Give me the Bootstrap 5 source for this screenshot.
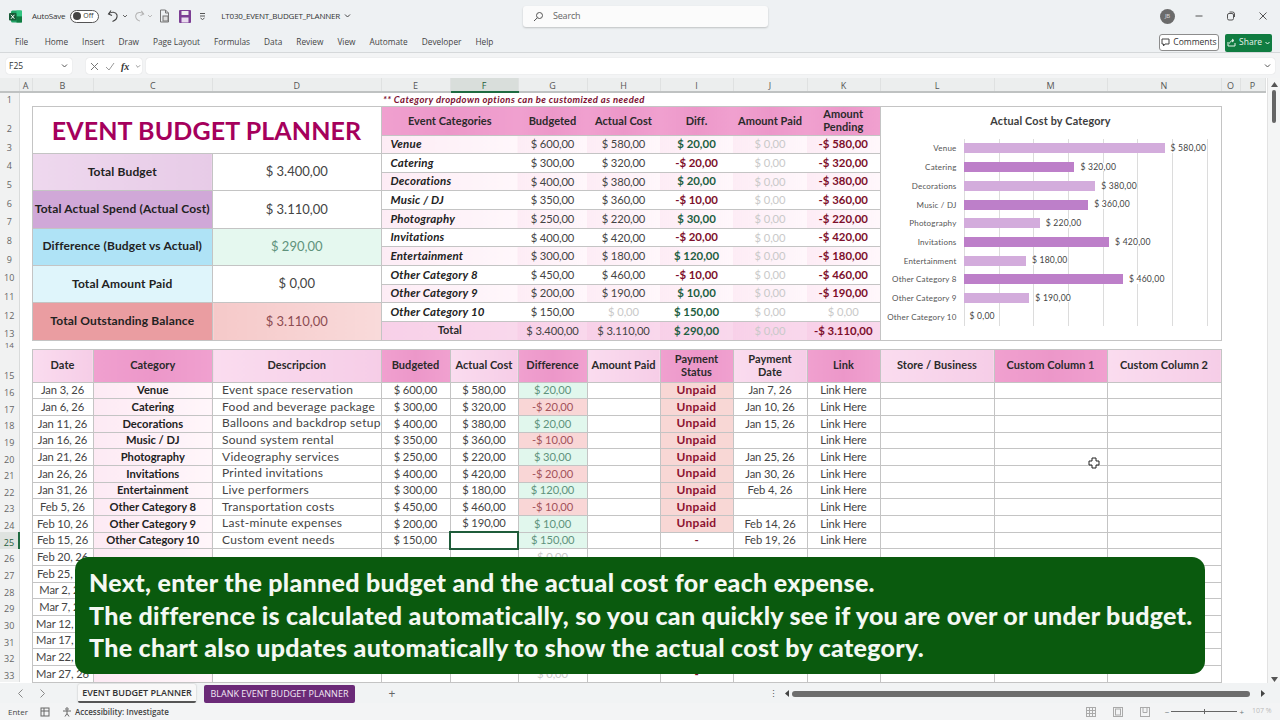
<!DOCTYPE html>
<html lang="en">
  <head>
    <meta charset="UTF-8" />
    <meta name="viewport" content="width=device-width, initial-scale=1.0" />
    <title>LT030_EVENT_BUDGET_PLANNER</title>
    <link href="https://cdn.jsdelivr.net/npm/bootstrap@5.3.3/dist/css/bootstrap.min.css" rel="stylesheet" />
    <style>
      body { background: #fff; overflow: hidden; }
      .xl-app { width: 1280px; height: 720px; overflow: hidden; font-family: "Open Sans", "Liberation Sans", sans-serif; color: #333; }

      /* window chrome */
      .xl-title { height: 30px; background: #eef1f3; font-size: 8px; letter-spacing: -.2px; padding: 2px 12px 0 9px; white-space: nowrap; }
      .xl-title svg { flex: none; }
      .xl-switch { width: 29px; height: 13px; border: 1px solid #555; border-radius: 7px; font-size: 7px; padding: 0 0 0 2px; margin: 0 7px 0 5px; background: #fff; letter-spacing: 0; }
      .xl-knob { width: 8px; height: 8px; border-radius: 50%; background: #444; margin-right: 2px; }
      .xl-search { width: 245px; height: 21px; margin-left: 172px; background: #fbfbfb; border-radius: 3px; box-shadow: 0 1px 2px rgba(0,0,0,.2); color: #666; padding-left: 10px; font-size: 9px; gap: 9px; }
      .xl-avatar { width: 15px; height: 15px; border-radius: 50%; background: #6b6b6b; color: #ddd; font-size: 6px; }
      .xl-ribbon { height: 23px; background: #eef1f3; font-size: 8.3px; padding: 3px 0 0 15px; border-bottom: 1px solid #d5d8da; white-space: nowrap; }
      .xl-ribbon-tab { margin-right: 14px; color: #444; }
      .xl-comments { width: 60px; height: 17px; border: 1px solid #8c8c8c; border-radius: 3px; background: #fff; font-size: 8.5px; gap: 3px; }
      .xl-share { width: 47px; height: 18px; margin: 0 8px 0 6px; border-radius: 2px; background: #107c41; color: #e8f3ec; font-size: 8.5px; gap: 3px; }
      .xl-formula { height: 25px; background: #f3f4f5; padding: 5px 5px 4px 6px; font-size: 8.5px; }
      .xl-box { background: #fff; border-radius: 3px; height: 16px; box-shadow: 0 0 1px rgba(0,0,0,.2); }
      .xl-namebox { width: 66px; padding: 0 4px 0 3px; }
      .xl-fnbox { width: 56px; gap: 6px; padding-left: 4px; margin: 0 4px 0 14px; }

      /* sheet */
      .xl-sheet { height: 605px; overflow: hidden; background: #fff; }
      .xl-grid-wrap { width: 1267px; overflow: hidden; }
      .xl-grid { table-layout: fixed; width: 1265px; font-family: Lato, "Liberation Sans", sans-serif; font-size: 12px; letter-spacing: .28px; color: #444; }
      .xl-grid td { padding: 0; overflow: hidden; white-space: nowrap; text-align: center; vertical-align: middle; line-height: 1; }
      .xl-h14 { height: 14px; }
      .xl-h29 { height: 29px; }
      .xl-h9 { height: 9px; }
      .xl-h33 { height: 33px; }
      .xl-top-row { height: 18.67px; }
      .xl-row { height: 16.67px; }
      .xl-grid .xl-top-row td, .xl-grid .xl-row td { padding-bottom: 1px; }
      .xl-grid td.xl-colhead { background: #eceeee; color: #555; font-family: "Open Sans", sans-serif; font-size: 9px; letter-spacing: 0; padding-top: 1px; border-bottom: 2px solid #bfc2c2; border-right: 1px solid #dfe1e1; }
      .xl-grid td.xl-colhead-on { background: #d9dedb; color: #1f5c3a; border-bottom: 2px solid #1f6b41; }
      .xl-grid td.xl-rowhead { background: #f1f2f2; color: #666; font-family: "Open Sans", sans-serif; font-size: 9px; letter-spacing: 0; vertical-align: bottom; padding-bottom: 2px; border-right: 1px solid #d9dbdb; }
      .xl-grid td.xl-rowhead-on { background: #dfe3e0; color: #1f5c3a; border-right: 2px solid #1f6b41; }
      .xl-grid td.xl-rowhead-tiny { font-size: 8px; line-height: 8px; padding-bottom: 0; }
      .xl-grid td.xl-bd { border: 1px solid #c4c4c4; }
      .xl-grid td.xl-hz { border-top: 1px solid #c4c4c4; border-bottom: 1px solid #c4c4c4; }
      .xl-grid td.xl-num { font-size: 11.2px; letter-spacing: -.1px; }
      .xl-grid td.xl-note { text-align: left; padding-left: 2px; font-size: 9.5px; font-weight: 700; font-style: italic; color: #7b1030; overflow: visible; letter-spacing: .42px; }
      .xl-grid td.xl-bigtitle { font-size: 25px; font-weight: 700; color: #a5005c; letter-spacing: .1px; background: #fff; padding-top: 1px; }
      .xl-grid td.xl-lbl { font-weight: 700; color: #222; font-size: 12px; letter-spacing: .15px; }
      .xl-grid td.xl-sum { font-size: 13px; letter-spacing: 0; color: #444; }
      .xl-grid td.xl-head { font-weight: 700; color: #2a2a2a; white-space: normal; line-height: 1.14; font-size: 11px; letter-spacing: .05px; }
      .xl-grid .xl-h29 td.xl-head { padding-top: 1px; }
      .xl-hd-dark { background: linear-gradient(90deg, #f0a0cf, #ec97c9 50%, #f0a0cf); }
      .xl-hd-light { background: linear-gradient(90deg, #fadcef, #f6cde7); }
      .xl-b-budget { background: linear-gradient(90deg, #eed8ee, #e7cbe7); }
      .xl-b-actual { background: #d0a8d8; }
      .xl-b-diff { background: #afe3f6; }
      .xl-b-paid { background: #dff5fb; }
      .xl-b-out { background: #ea9da1; }
      .xl-grid td.xl-v-diff { background: #e5f8ef; color: #5f937c; }
      .xl-grid td.xl-v-out { background: linear-gradient(90deg, #f5c9c9, #f9dada); color: #8d4c52; }
      .xl-grid td.xl-cat { text-align: left; padding-left: 9px; font-weight: 700; font-style: italic; color: #222; font-size: 11.5px; letter-spacing: .2px; }
      .xl-alt { background: linear-gradient(90deg, #fdecf5, #fff7fb); }
      .xl-total { background: linear-gradient(90deg, #f8d0e8, #f9d8ec); }
      .xl-grid td.xl-good { color: #1e5f42; font-weight: 700; font-size: 11.4px; letter-spacing: 0; }
      .xl-grid td.xl-bad { color: #7d0f2b; font-weight: 700; font-size: 11.4px; letter-spacing: 0; }
      .xl-grid td.xl-pale { color: #c9c9c9; }
      .xl-grid td.xl-desc { text-align: left; padding-left: 9px; }
      .xl-grid td.xl-catname { font-weight: 700; font-size: 11.2px; letter-spacing: 0; color: #222; background: linear-gradient(90deg, #fdeaf4, #fff6fa); }
      .xl-grid td.xl-d-good { background: #e1f7ed; color: #5f937c; }
      .xl-grid td.xl-d-bad { background: #f9d6d6; color: #a3525a; }
      .xl-grid td.xl-status { background: #f8d7d5; color: #8d1230; font-weight: 700; }
      .xl-grid td.xl-picked { border: 2px solid #1f5c3a; }

      /* chart */
      .xl-chart { height: 232px; font-size: 9px; letter-spacing: .2px; color: #555; padding-top: 7px; }
      .xl-chart-title { font-size: 10.8px; font-weight: 700; color: #3c3c3c; line-height: 14px; margin-bottom: 11px; }
      .xl-chart-row { height: 18.7px; }
      .xl-chart-lbl { width: 76px; text-align: right; flex: none; font-size: 8px; }
      .xl-plot { width: 245px; height: 100%; margin-left: 7px; background: repeating-linear-gradient(90deg, #dcdcdc 0 1px, transparent 1px 34.67px); }
      .xl-bar { height: 10px; }
      .xl-bar-a { background: #d3acdc; }
      .xl-bar-b { background: #bd7fc9; }
      .xl-bar-val { margin-left: 6px; font-size: 8.6px; color: #444; background: #fff; }

      .xl-vscroll { width: 13px; background: #f4f5f5; border-left: 1px solid #e2e2e2; }
      .xl-vthumb { width: 4px; height: 33px; border-radius: 2px; background: #666; margin-top: 3px; }

      /* caption over the sheet */
      .xl-caption { left: 75px; top: 479px; width: 1130px; height: 117px; padding: 9px 0 0 14px; background: #0a5a0e; border-radius: 13px; color: #f4f8f2; font-family: Lato, "Noto Sans", sans-serif; font-weight: 900; font-size: 25px; line-height: 32.5px; letter-spacing: .29px; white-space: nowrap; }
      .xl-cursor { left: 1088px; top: 379px; }

      /* bottom */
      .xl-tabs { height: 20px; padding-top: 1px; background: #f1f3f4; font-size: 9px; white-space: nowrap; }
      .xl-arrows { width: 78px; gap: 17px; padding-left: 18px; }
      .xl-tab-on { width: 118px; height: 19px; background: #f8f8f8; font-weight: 600; border-radius: 2px; border-bottom: 2px solid #555; box-shadow: 0 0 2px rgba(0,0,0,.25); color: #333; }
      .xl-tab-off { width: 151px; height: 18px; margin-left: 8px; background: #6b2a78; color: #f2e9f4; border-radius: 2px; }
      .xl-plus { margin-left: 32px; width: 10px; color: #666; font-size: 12px; }
      .xl-dots { margin-left: 372px; width: 8px; color: #555; }
      .xl-hscroll { width: 480px; margin-left: 8px; gap: 3px; }
      .xl-hthumb { width: 458px; height: 6px; border-radius: 3px; background: #6d6d6d; }
      .xl-status-bar { height: 17px; background: #f3f4f5; font-size: 8px; padding: 0 6px 0 8px; color: #444; white-space: nowrap; }
      .xl-enter { width: 32px; }
      .xl-zoom { width: 66px; height: 5px; margin: 0 2px; background: linear-gradient(#666, #666) center / 100% 1px no-repeat, linear-gradient(#666, #666) center / 1px 100% no-repeat; }
      .xl-pct { width: 22px; margin-left: 8px; color: #bbb; font-size: 7px; }
    </style>
  </head>

  <body>
    <div class="xl-app d-flex flex-column">
      <div class="xl-title d-flex align-items-center">
        <svg width="13" height="13" viewBox="0 0 13 13"><rect x="2" y="0.5" width="11" height="12" rx="1.5" fill="#21a366" /><rect x="7.5" y="0.5" width="5.5" height="6" fill="#33c481" /><rect x="7.5" y="6.5" width="5.5" height="6" fill="#107c41" /><rect x="0" y="3" width="7.5" height="7.5" rx="1" fill="#185c37" /><path d="M2 4.8l3.4 4M5.4 4.8L2 8.8" stroke="#fff" stroke-width="1" /></svg>
        <span style="margin-left:10px">AutoSave</span>
        <span class="xl-switch d-flex align-items-center"><span class="xl-knob"></span>Off</span>
        <svg width="14" height="14" viewBox="0 0 14 14" fill="none" stroke="#444" stroke-width="1.1"><path d="M5 1.5L2.5 5 6 6.5" /><path d="M2.8 4.8C5 2.6 10 2.6 11 6c.6 3-2 5.5-4.5 6.5" /></svg>
        <svg style="margin-left:2px" width="6" height="6" viewBox="0 0 6 6" fill="none" stroke="#666"><path d="M1 2l2 2 2-2" /></svg>
        <svg style="margin-left:5px" width="13" height="14" viewBox="0 0 14 14" fill="none" stroke="#b3b3b3" stroke-width="1.1"><path d="M9 1.5L11.5 5 8 6.5" /><path d="M11.2 4.8C9 2.6 4 2.6 3 6c-.6 3 2 5.5 4.5 6.5" /></svg>
        <svg style="margin-left:1px" width="6" height="6" viewBox="0 0 6 6" fill="none" stroke="#bbb"><path d="M1 2l2 2 2-2" /></svg>
        <svg style="margin-left:6px" width="11" height="14" viewBox="0 0 11 14" fill="none" stroke="#777"><path d="M1.5 1h5l3 3v9h-8z" /><path d="M6.5 1v3h3" /><rect x="4" y="7" width="5" height="5" fill="#ddd" /></svg>
        <svg style="margin-left:9px" width="12" height="13" viewBox="0 0 12 13"><rect width="12" height="13" rx="1" fill="#7c3e94" /><rect x="2.5" y="1" width="7" height="4" fill="#eee" /><rect x="2.5" y="7.5" width="7" height="5" fill="#e9dcef" /></svg>
        <svg style="margin-left:8px" width="7" height="8" viewBox="0 0 7 8" fill="none" stroke="#555"><path d="M1 1.5h5M1 4h5" /><path d="M1.5 6l2 1.5 2-1.5" /></svg>
        <span style="margin-left:15px">LT030_EVENT_BUDGET_PLANNER</span>
        <svg class="ms-1" width="7" height="6" viewBox="0 0 7 6" fill="none" stroke="#444"><path d="M1 1.5l2.5 2.5L6 1.5" /></svg>
        <div class="xl-search d-flex align-items-center">
          <svg width="11" height="11" viewBox="0 0 11 11" fill="none" stroke="#555"><circle cx="6.5" cy="4.5" r="3" /><path d="M4.3 6.8L1 10" /></svg>
          Search
        </div>
        <span class="xl-avatar d-flex align-items-center justify-content-center ms-auto">JB</span>
        <svg style="margin-left:19px" width="10" height="10" viewBox="0 0 10 10" stroke="#555"><path d="M1.5 5h7" /></svg>
        <svg style="margin-left:22px" width="10" height="10" viewBox="0 0 10 10" fill="none" stroke="#555"><rect x="1.5" y="2.5" width="6" height="6.5" rx="1.5" /><path d="M3.5 1h3a2 2 0 0 1 2 2v3" /></svg>
        <svg style="margin-left:22px" width="10" height="10" viewBox="0 0 10 10" stroke="#555"><path d="M1.5 1.5l7 7M8.5 1.5l-7 7" /></svg>
      </div>

      <div class="xl-ribbon d-flex align-items-center">
        <span class="xl-ribbon-tab" style="margin-right:16.5px">File</span>
        <span class="xl-ribbon-tab">Home</span>
        <span class="xl-ribbon-tab">Insert</span>
        <span class="xl-ribbon-tab">Draw</span>
        <span class="xl-ribbon-tab">Page Layout</span>
        <span class="xl-ribbon-tab">Formulas</span>
        <span class="xl-ribbon-tab">Data</span>
        <span class="xl-ribbon-tab">Review</span>
        <span class="xl-ribbon-tab">View</span>
        <span class="xl-ribbon-tab">Automate</span>
        <span class="xl-ribbon-tab">Developer</span>
        <span class="xl-ribbon-tab">Help</span>
        <div class="xl-comments d-flex align-items-center justify-content-center ms-auto">
          <svg width="9" height="9" viewBox="0 0 9 9" fill="none" stroke="#444"><path d="M1 1h7v5H4L2.5 8V6H1z" /></svg>
          Comments
        </div>
        <div class="xl-share d-flex align-items-center justify-content-center">
          <svg width="9" height="9" viewBox="0 0 9 9" fill="none" stroke="#e8f3ec"><path d="M1 4v4h7V5" /><path d="M2.5 5.5C3 3.5 4.5 2.5 6 2.5M5 1l2 1.5L5 4" /></svg>
          Share
          <svg width="5" height="4" viewBox="0 0 5 4" fill="none" stroke="#e8f3ec"><path d="M.5 1l2 2 2-2" /></svg>
        </div>
      </div>

      <div class="xl-formula d-flex align-items-center">
        <div class="xl-box xl-namebox d-flex align-items-center justify-content-between">
          F25
          <svg width="7" height="6" viewBox="0 0 7 6" fill="none" stroke="#555"><path d="M1 1.5l2.5 2.5L6 1.5" /></svg>
        </div>
        <div class="xl-box xl-fnbox d-flex align-items-center">
          <svg width="9" height="9" viewBox="0 0 9 9" stroke="#777"><path d="M1 1l7 7M8 1L1 8" /></svg>
          <svg width="10" height="9" viewBox="0 0 10 9" fill="none" stroke="#999"><path d="M1 5l3 3 5-7" /></svg>
          <i style="font-family:'Liberation Serif',serif;font-weight:700;font-size:10px">fx</i>
          <svg width="6" height="5" viewBox="0 0 7 6" fill="none" stroke="#888"><path d="M1 1.5l2.5 2.5L6 1.5" /></svg>
        </div>
        <div class="xl-box flex-grow-1 d-flex align-items-center justify-content-end pe-1">
          <svg width="7" height="6" viewBox="0 0 7 6" fill="none" stroke="#555"><path d="M1 1.5l2.5 2.5L6 1.5" /></svg>
        </div>
      </div>

      <div class="xl-sheet d-flex position-relative">
        <div class="xl-grid-wrap">
          <table class="xl-grid"><colgroup id="cols"></colgroup><tbody id="grid"></tbody></table>
        </div>
        <div class="xl-vscroll d-flex flex-column align-items-center">
          <svg class="mt-1" width="7" height="5" viewBox="0 0 7 5" fill="#555"><path d="M3.5 0L7 5H0z" /></svg>
          <div class="xl-vthumb"></div>
          <svg style="margin-top:auto;margin-bottom:1px" width="7" height="5" viewBox="0 0 7 5" fill="#555"><path d="M3.5 5L7 0H0z" /></svg>
        </div>
        <svg class="xl-cursor position-absolute" width="12" height="12" viewBox="0 0 12 12"><path d="M4 1h4v3h3v4H8v3H4V8H1V4h3z" fill="#fff" stroke="#222" /></svg>
        <div class="xl-caption position-absolute">
          Next, enter the planned budget and the actual cost for each expense.<br />
          The difference is calculated automatically, so you can quickly see if you are over or under budget.<br />
          The chart also updates automatically to show the actual cost by category.
        </div>
      </div>

      <div class="xl-tabs d-flex align-items-center">
        <div class="xl-arrows d-flex">
          <svg width="5" height="9" viewBox="0 0 5 9" fill="none" stroke="#888"><path d="M4.5 .5l-4 4 4 4" /></svg>
          <svg width="5" height="9" viewBox="0 0 5 9" fill="none" stroke="#888"><path d="M.5 .5l4 4-4 4" /></svg>
        </div>
        <div class="xl-tab-on d-flex align-items-center justify-content-center">EVENT BUDGET PLANNER</div>
        <div class="xl-tab-off d-flex align-items-center justify-content-center">BLANK EVENT BUDGET PLANNER</div>
        <span class="xl-plus text-center">+</span>
        <span class="xl-dots">&#8942;</span>
        <div class="xl-hscroll d-flex align-items-center">
          <svg width="4" height="7" viewBox="0 0 4 7" fill="#444"><path d="M4 0L0 3.5 4 7z" /></svg>
          <div class="xl-hthumb"></div>
          <svg class="ms-2" width="4" height="7" viewBox="0 0 4 7" fill="#444"><path d="M0 0l4 3.5L0 7z" /></svg>
        </div>
      </div>
      <div class="xl-status-bar d-flex align-items-center">
        <span class="xl-enter">Enter</span>
        <svg width="10" height="10" viewBox="0 0 10 10" fill="none" stroke="#666"><rect x="1" y="1" width="8" height="8" /><path d="M1 4h8M4 1v8" /></svg>
        <svg style="margin-left:12px" width="10" height="10" viewBox="0 0 10 10" fill="none" stroke="#666"><circle cx="5" cy="2" r="1.2" /><path d="M1 4h8M5 4v2.5M3 9.5L5 6.5 7 9.5" /></svg>
        <span class="fw-semibold" style="margin-left:3px">Accessibility: Investigate</span>
        <svg class="ms-auto" width="10" height="10" viewBox="0 0 10 10" fill="none" stroke="#aaa"><rect x=".5" y=".5" width="9" height="9" /><path d="M.5 3.5h9M.5 6.5h9M3.5 .5v9M6.5 .5v9" /></svg>
        <svg style="margin-left:17px" width="10" height="10" viewBox="0 0 10 10" fill="none" stroke="#aaa"><rect x=".5" y=".5" width="9" height="9" /><rect x="2.5" y="2" width="5" height="6" /></svg>
        <svg style="margin-left:17px" width="10" height="10" viewBox="0 0 10 10" fill="none" stroke="#aaa"><rect x=".5" y=".5" width="9" height="9" /><path d="M3 .5v5h4v-5" /></svg>
        <span class="text-secondary" style="margin-left:15px">&minus;</span>
        <span class="xl-zoom"></span>
        <span class="text-secondary">+</span>
        <span class="xl-pct">107 %</span>
      </div>
    </div>

    <script src="https://cdn.jsdelivr.net/npm/bootstrap@5.3.3/dist/js/bootstrap.bundle.min.js"></script>
    <script>
      const colWidths = [19, 13, 61, 119.5, 168.5, 69, 68, 69, 73, 73, 74, 73, 114, 113, 114, 19, 25];
      const colNames = ["", "A", "B", "C", "D", "E", "F", "G", "H", "I", "J", "K", "L", "M", "N", "O", "P"];

      function money(v) {
        const s = Math.abs(v).toLocaleString("de-DE", { minimumFractionDigits: 2 });
        return (v < 0 ? "-$ " : "$ ") + s;
      }

      const cats = [
        ["Venue", 600, 580], ["Catering", 300, 320], ["Decorations", 400, 380],
        ["Music / DJ", 350, 360], ["Photography", 250, 220], ["Invitations", 400, 420],
        ["Entertainment", 300, 180], ["Other Category 8", 450, 460],
        ["Other Category 9", 200, 190], ["Other Category 10", 150, 0],
      ];
      const summary = {
        4: ["Total Budget", "xl-b-budget", "$ 3.400,00", ""],
        6: ["Total Actual Spend (Actual Cost)", "xl-b-actual", "$ 3.110,00", ""],
        8: ["Difference (Budget vs Actual)", "xl-b-diff", "$ 290,00", "xl-v-diff"],
        10: ["Total Amount Paid", "xl-b-paid", "$ 0,00", ""],
        12: ["Total Outstanding Balance", "xl-b-out", "$ 3.110,00", "xl-v-out"],
      };
      const expenses = [
        ["Jan 3, 26", "Venue", "Event space reservation", 600, 580, "Jan 7, 26"],
        ["Jan 6, 26", "Catering", "Food and beverage package", 300, 320, "Jan 10, 26"],
        ["Jan 11, 26", "Decorations", "Balloons and backdrop setup", 400, 380, "Jan 15, 26"],
        ["Jan 16, 26", "Music / DJ", "Sound system rental", 350, 360, ""],
        ["Jan 21, 26", "Photography", "Videography services", 250, 220, "Jan 25, 26"],
        ["Jan 26, 26", "Invitations", "Printed invitations", 400, 420, "Jan 30, 26"],
        ["Jan 31, 26", "Entertainment", "Live performers", 300, 180, "Feb 4, 26"],
        ["Feb 5, 26", "Other Category 8", "Transportation costs", 450, 460, ""],
        ["Feb 10, 26", "Other Category 9", "Last-minute expenses", 200, 190, "Feb 14, 26"],
        ["Feb 15, 26", "Other Category 10", "Custom event needs", 150, 0, "Feb 19, 26"],
      ];
      const laterDates = ["Feb 20, 26", "Feb 25, 26", "Mar 2, 26", "Mar 7, 26", "Mar 12, 26", "Mar 17, 26", "Mar 22, 26", "Mar 27, 26"];

      function chartHtml() {
        const rows = cats.map((c, i) => `
          <div class="xl-chart-row d-flex align-items-center">
            <div class="xl-chart-lbl">${c[0]}</div>
            <div class="xl-plot d-flex align-items-center">
              <div class="xl-bar ${i % 2 ? "xl-bar-b" : "xl-bar-a"}" style="width:${c[2] * 0.3466}px"></div>
              <span class="xl-bar-val">${money(c[2])}</span>
            </div>
          </div>`).join("");
        return `<div class="xl-chart"><div class="xl-chart-title text-center">Actual Cost by Category</div>${rows}</div>`;
      }

      function head(r, cls) {
        return `<td class="xl-rowhead ${cls || ""}">${r}</td><td></td>`;
      }

      function topRow(r) {
        const c = cats[r - 3];
        let sum = "";
        if (summary[r]) {
          const s = summary[r];
          sum = `<td class="xl-bd xl-lbl ${s[1]}" colspan="2" rowspan="2">${s[0]}</td><td class="xl-bd xl-sum ${s[3]}" rowspan="2">${s[2]}</td>`;
        }
        if (!c) {
          return `<tr class="xl-top-row">${head(r)}${sum}
            <td class="xl-hz xl-head xl-total" colspan="2">Total</td>
            <td class="xl-hz xl-num xl-total">$ 3.400,00</td><td class="xl-hz xl-num xl-total">$ 3.110,00</td>
            <td class="xl-hz xl-total xl-good">$ 290,00</td><td class="xl-hz xl-num xl-total xl-pale">$ 0,00</td>
            <td class="xl-hz xl-total xl-bad">-$ 3.110,00</td><td></td><td></td></tr>`;
        }
        const diff = c[1] - c[2];
        const alt = r % 2 ? "xl-alt" : "";
        return `<tr class="xl-top-row">${head(r)}${sum}
          <td class="xl-hz xl-cat ${alt}" colspan="2">${c[0]}</td>
          <td class="xl-hz xl-num ${alt}">${money(c[1])}</td>
          <td class="xl-hz xl-num ${alt} ${c[2] ? "" : "xl-pale"}">${money(c[2])}</td>
          <td class="xl-hz ${alt} ${diff < 0 ? "xl-bad" : "xl-good"}">${money(diff)}</td>
          <td class="xl-hz xl-num ${alt} xl-pale">$ 0,00</td>
          <td class="xl-hz ${alt} ${c[2] ? "xl-bad" : "xl-num xl-pale"}">${money(-c[2])}</td>
          <td></td><td></td></tr>`;
      }

      function detailRow(r, e) {
        const diff = e[3] - e[4];
        const picked = r === 25;
        return `<tr class="xl-row">${head(r, picked ? "xl-rowhead-on" : "")}
          <td class="xl-bd xl-num">${e[0]}</td><td class="xl-bd xl-catname">${e[1]}</td><td class="xl-bd xl-desc">${e[2]}</td>
          <td class="xl-bd xl-num">${money(e[3])}</td>
          <td class="xl-bd xl-num ${picked ? "xl-picked" : ""}">${e[4] ? money(e[4]) : ""}</td>
          <td class="xl-bd xl-num ${diff < 0 ? "xl-d-bad" : "xl-d-good"}">${money(diff)}</td>
          <td class="xl-bd"></td>
          <td class="xl-bd ${picked ? "xl-bad" : "xl-status"}">${picked ? "-" : "Unpaid"}</td>
          <td class="xl-bd xl-num">${e[5]}</td><td class="xl-bd xl-num">Link Here</td>
          <td class="xl-bd"></td><td class="xl-bd"></td><td class="xl-bd"></td><td></td><td></td></tr>`;
      }

      function emptyRow(r, date) {
        return `<tr class="xl-row">${head(r)}
          <td class="xl-bd xl-num">${date}</td><td class="xl-bd xl-catname"></td><td class="xl-bd"></td><td class="xl-bd"></td><td class="xl-bd"></td>
          <td class="xl-bd xl-num xl-pale">$ 0,00</td><td class="xl-bd"></td><td class="xl-bd xl-bad">-</td>
          <td class="xl-bd"></td><td class="xl-bd"></td><td class="xl-bd"></td><td class="xl-bd"></td><td class="xl-bd"></td><td></td><td></td></tr>`;
      }

      document.getElementById("cols").innerHTML = colWidths.map((w) => `<col style="width:${w}px" />`).join("");

      let html = `<tr class="xl-h14">${colNames.map((n) => `<td class="xl-colhead ${n === "F" ? "xl-colhead-on" : ""}">${n}</td>`).join("")}</tr>`;
      html += `<tr class="xl-h14">${head(1)}<td colspan="3"></td><td class="xl-note" colspan="6">** Category dropdown options can be customized as needed</td><td colspan="6"></td></tr>`;
      html += `<tr class="xl-h29">${head(2)}
        <td class="xl-bd xl-bigtitle" colspan="3" rowspan="2">EVENT BUDGET PLANNER</td>
        <td class="xl-hz xl-head xl-hd-dark" colspan="2">Event Categories</td>
        <td class="xl-hz xl-head xl-hd-dark">Budgeted</td><td class="xl-hz xl-head xl-hd-dark">Actual Cost</td>
        <td class="xl-hz xl-head xl-hd-dark">Diff.</td><td class="xl-hz xl-head xl-hd-dark">Amount Paid</td>
        <td class="xl-hz xl-head xl-hd-dark">Amount Pending</td>
        <td class="xl-bd" colspan="3" rowspan="12">${chartHtml()}</td><td></td><td></td></tr>`;
      for (let r = 3; r <= 13; r++) html += topRow(r);
      html += `<tr class="xl-h9">${head(14, "xl-rowhead-tiny")}<td colspan="15"></td></tr>`;

      const titles = ["Date", "Category", "Descripcion", "Budgeted", "Actual Cost", "Difference", "Amount Paid", "Payment<br />Status", "Payment<br />Date", "Link", "Store / Business", "Custom Column 1", "Custom Column 2"];
      html += `<tr class="xl-h33">${head(15)}${titles.map((t, i) => `<td class="xl-bd xl-head ${i % 2 ? "xl-hd-dark" : "xl-hd-light"}">${t}</td>`).join("")}<td></td><td></td></tr>`;
      expenses.forEach((e, i) => { html += detailRow(16 + i, e); });
      laterDates.forEach((d, i) => { html += emptyRow(26 + i, d); });
      document.getElementById("grid").innerHTML = html;
    </script>
  </body>
</html>
